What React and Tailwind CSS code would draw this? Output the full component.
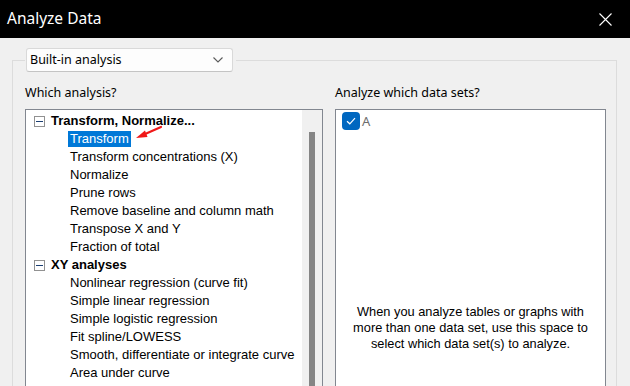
import React from 'react';

const groups = [
    {
        title: 'Transform, Normalize...',
        items: [
            'Transform',
            'Transform concentrations (X)',
            'Normalize',
            'Prune rows',
            'Remove baseline and column math',
            'Transpose X and Y',
            'Fraction of total',
        ],
    },
    {
        title: 'XY analyses',
        items: [
            'Nonlinear regression (curve fit)',
            'Simple linear regression',
            'Simple logistic regression',
            'Fit spline/LOWESS',
            'Smooth, differentiate or integrate curve',
            'Area under curve',
        ],
    },
];

function MinusBox() {
    return (
        <span className="flex items-center justify-center w-[11px] h-[11px] border border-[#919191] bg-white mr-[6px]">
            <span className="block w-[7px] h-[1px] bg-[#1c3f72]" />
        </span>
    );
}

export default function App() {
    const ui = { fontFamily: '"Noto Sans", "Open Sans", sans-serif' };
    const list = { fontFamily: '"Liberation Sans", Arial, sans-serif' };

    return (
        <div className="w-[630px] h-[386px] overflow-hidden bg-[#f0f0f0] flex flex-col" style={ui}>
            {/* title bar */}
            <div className="h-[38px] shrink-0 bg-black flex items-center justify-between pl-[7px] pr-[18px]">
                <span className="text-white text-[15.5px] leading-none">Analyze Data</span>
                <svg width="13" height="13" viewBox="0 0 13 13">
                    <path d="M0.5 0.5 L12.5 12.5 M12.5 0.5 L0.5 12.5" stroke="#ffffff" strokeWidth="1.1" />
                </svg>
            </div>

            <div className="pl-[12px] pr-[13px] pt-[10px]">
                <fieldset className="border border-[#dcdcdc] h-[400px]">
                    <legend className="ml-[12px] pl-[1px] pr-[3px]">
                        <div className="w-[207px] h-[24px] bg-[#fdfdfd] border border-[#d9d9d9] border-b-[#c4c4c4] rounded-[3px] flex items-center justify-between pl-[3px] pr-[9px]">
                            <span className="text-[12.5px] text-black">Built-in analysis</span>
                            <svg width="10" height="6" viewBox="0 0 10 6">
                                <path d="M0.5 0.5 L5 5 L9.5 0.5" fill="none" stroke="#5a5a5a" strokeWidth="1.1" />
                            </svg>
                        </div>
                    </legend>

                    <div className="flex gap-[12px] pl-[12px] pt-[12px]">
                        {/* left column */}
                        <div className="w-[298px]">
                            <div className="text-[12.5px] h-[17px] leading-[17px] text-black mb-[8px]">Which analysis?</div>
                            <div className="relative h-[300px] border border-[#828790] bg-white flex">
                                <div className="flex-1 pt-[2px]" style={list}>
                                    {groups.map((g) => (
                                        <div key={g.title}>
                                            <div className="h-[18px] flex items-center pl-[8px]">
                                                <MinusBox />
                                                <span className="text-[13px] font-bold text-black">{g.title}</span>
                                            </div>
                                            {g.items.map((it, i) => (
                                                <div key={it} className="h-[18px] flex items-center pl-[42px]">
                                                    <span
                                                        className={
                                                            g.title.startsWith('Transform') && i === 0
                                                                ? 'text-[13px] leading-[16px] px-[2px] bg-[#0078d7] text-white'
                                                                : 'text-[13px] leading-[16px] px-[2px] text-black'
                                                        }
                                                    >
                                                        {it}
                                                    </span>
                                                </div>
                                            ))}
                                        </div>
                                    ))}
                                </div>
                                {/* scrollbar */}
                                <div className="w-[20px] bg-[#f0f0f0] flex justify-center pt-[22px]">
                                    <div className="w-[6px] h-full bg-[#858585]" />
                                </div>
                                {/* red arrow */}
                                <svg className="absolute left-[108px] top-[14px]" width="30" height="18" viewBox="0 0 30 18">
                                    <path d="M27 3 L10 10.5" stroke="#f01818" strokeWidth="2.2" strokeLinecap="round" />
                                    <path d="M2 14 L11 6.5 L13.5 13 Z" fill="#f01818" />
                                </svg>
                            </div>
                        </div>

                        {/* right column */}
                        <div className="w-[271px]">
                            <div className="text-[12.5px] h-[17px] leading-[17px] text-black mb-[8px]">Analyze which data sets?</div>
                            <div className="h-[300px] border border-[#828790] bg-white flex flex-col">
                                <div className="flex items-center pl-[6px] pt-[2px]">
                                    <span className="w-[18px] h-[18px] rounded-[4px] bg-[#0067c0] flex items-center justify-center">
                                        <svg width="10" height="8" viewBox="0 0 10 8">
                                            <path d="M1 4.2 L3.8 6.8 L9 1.2" fill="none" stroke="#ffffff" strokeWidth="1.2" />
                                        </svg>
                                    </span>
                                    <span className="ml-[2px] text-[13px] text-[#6d6d6d] leading-[18px]">A</span>
                                </div>
                                <p className="mt-[174px] text-center text-[12.8px] leading-[16px] text-black" style={list}>
                                    When you analyze tables or graphs with
                                    <br />
                                    more than one data set, use this space to
                                    <br />
                                    select which data set(s) to analyze.
                                </p>
                            </div>
                        </div>
                    </div>
                </fieldset>
            </div>
        </div>
    );
}
